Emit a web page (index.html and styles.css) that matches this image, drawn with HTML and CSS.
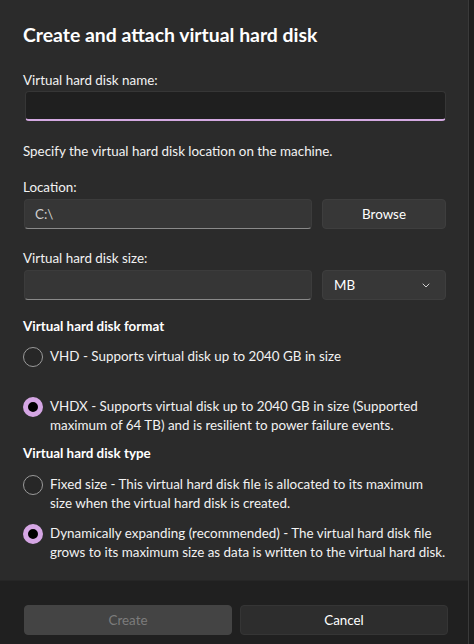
FILE: index.html
```html
<!DOCTYPE html>
<html lang="en">
<head>
<meta charset="utf-8">
<title>Create and attach virtual hard disk</title>
<link rel="stylesheet" href="styles.css">
</head>
<body>
<div class="dialog">
  <div class="content">
    <h1 class="title">Create and attach virtual hard disk</h1>
    <div class="label l-name">Virtual hard disk name:</div>
    <div class="input focused"></div>
    <div class="text l-spec">Specify the virtual hard disk location on the machine.</div>
    <div class="label l-loc">Location:</div>
    <div class="row">
      <div class="input field"><span class="value">C:\</span></div>
      <div class="btn side">Browse</div>
    </div>
    <div class="label l-size">Virtual hard disk size:</div>
    <div class="row">
      <div class="input field"></div>
      <div class="btn side select"><span>MB</span>
        <svg class="chev" width="8" height="5" viewBox="0 0 8 5"><path d="M1 1 L4 4 L7 1" fill="none" stroke="#cfcfcf" stroke-width="1" stroke-linecap="round" stroke-linejoin="round"/></svg>
      </div>
    </div>
    <div class="heading h-format">Virtual hard disk format</div>
    <div class="radio r-vhd"><span class="dot"></span><span class="rtext">VHD - Supports virtual disk up to 2040 GB in size</span></div>
    <div class="radio r-vhdx"><span class="dot on"></span><span class="rtext">VHDX - Supports virtual disk up to 2040 GB in size (Supported maximum of 64 TB) and is resilient to power failure events.</span></div>
    <div class="heading h-type">Virtual hard disk type</div>
    <div class="radio r-fixed"><span class="dot"></span><span class="rtext">Fixed size - This virtual hard disk file is allocated to its maximum size when the virtual hard disk is created.</span></div>
    <div class="radio r-dyn"><span class="dot on"></span><span class="rtext">Dynamically expanding (recommended) - The virtual hard disk file grows to its maximum size as data is written to the virtual hard disk.</span></div>
  </div>
  <div class="footer">
    <div class="btn foot disabled">Create</div>
    <div class="btn foot">Cancel</div>
  </div>
</div>
</body>
</html>
```
FILE: styles.css
```css
* { box-sizing: border-box; }
html, body { margin: 0; padding: 0; }
body {
  background: #1d1d1d;
  font-family: Lato, "Liberation Sans", sans-serif;
  color: #ffffff;
  font-size: 13.4px;
}
.dialog {
  width: 469px;
  height: 644px;
  background: #2b2b2b;
  border-right: 1px solid #3a3a3a;
  display: flex;
  flex-direction: column;
}
.content {
  flex: 1;
  padding: 21px 22px 0 24px;
  display: flex;
  flex-direction: column;
}
.title {
  margin: 0;
  font-size: 19.4px;
  font-weight: 700;
  line-height: 28px;
  margin-left: -1px;
}
.label, .text {
  line-height: 20px;
  margin-left: -1px;
  color: #f2f2f2;
}
.l-name { margin-top: 21px; }
.l-spec { margin-top: 20px; }
.l-loc { margin-top: 16px; }
.l-size { margin-top: 19px; }
.input {
  height: 30px;
  border-radius: 4px;
  border: 1px solid #363636;
}
.focused {
  margin-top: 1px;
  margin-left: 1px;
  background: #1f1f1f;
  border-bottom: 2px solid #d3a9e1;
}
.row {
  margin-top: 2px;
  display: flex;
  gap: 10px;
}
.field {
  width: 288px;
  background: #363636;
  border-color: #3c3c3c;
  border-bottom-color: #8a8a8a;
  display: flex;
  align-items: center;
  padding-left: 10px;
}
.value { color: #cfcfcf; }
.btn {
  height: 30px;
  border-radius: 4px;
  background: #373737;
  border: 1px solid #3e3e3e;
  display: flex;
  align-items: center;
  justify-content: center;
}
.side { width: 124px; }
.select {
  justify-content: space-between;
  padding: 0 15px 0 11px;
}
.heading {
  font-weight: 700;
  line-height: 20px;
  margin-left: -1px;
}
.h-format { margin-top: 16px; }
.h-type { margin-top: 8px; }
.radio {
  display: flex;
  gap: 7px;
  line-height: 19px;
  color: #f2f2f2;
}
.r-vhd { margin-top: 11px; }
.r-vhdx { margin-top: 30px; }
.r-fixed { margin-top: 12px; }
.r-dyn { margin-top: 11px; }
.dot {
  flex: none;
  width: 20px;
  height: 20px;
  border-radius: 50%;
  border: 1px solid #9a9a9a;
  background: #272727;
  margin-left: -1px;
}
.dot.on {
  border: 5px solid #d5a6e4;
  background: #000000;
}
.footer {
  height: 64px;
  background: #202020;
  border-top: 1px solid #262626;
  padding: 24px 20px 0 24px;
  display: flex;
  gap: 8px;
}
.foot {
  flex: 1;
  height: 30px;
  background: #2d2d2d;
  border-color: #353535;
}
.foot.disabled {
  background: #444444;
  border-color: #444444;
  color: #7c7c7c;
}
```
